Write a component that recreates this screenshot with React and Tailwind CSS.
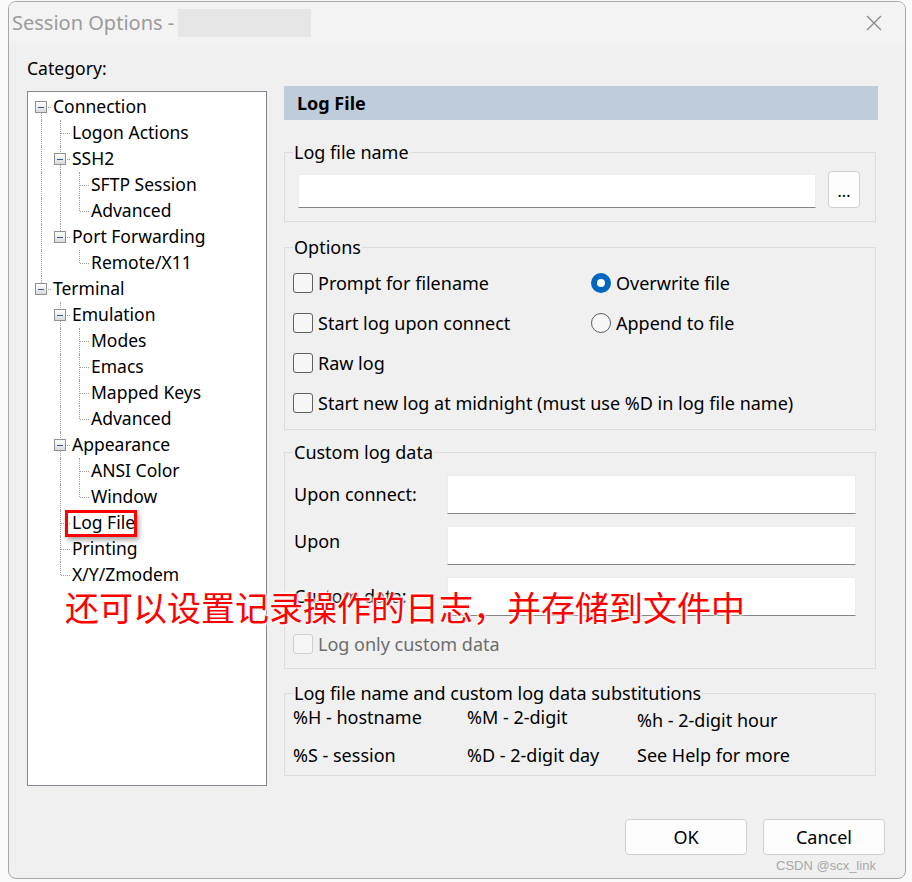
import React from "react";

const FONT = { fontFamily: '"Noto Sans", "Open Sans", sans-serif' };

const treeRows = [
  { label: "Connection", guides: [], elbow: "first", box: true },
  { label: "Logon Actions", guides: [true], elbow: "mid" },
  { label: "SSH2", guides: [true], elbow: "mid", box: true },
  { label: "SFTP Session", guides: [true, true], elbow: "mid" },
  { label: "Advanced", guides: [true, true], elbow: "last" },
  { label: "Port Forwarding", guides: [true], elbow: "last", box: true },
  { label: "Remote/X11", guides: [true, false], elbow: "last" },
  { label: "Terminal", guides: [], elbow: "last", box: true },
  { label: "Emulation", guides: [false], elbow: "mid", box: true },
  { label: "Modes", guides: [false, true], elbow: "mid" },
  { label: "Emacs", guides: [false, true], elbow: "mid" },
  { label: "Mapped Keys", guides: [false, true], elbow: "mid" },
  { label: "Advanced", guides: [false, true], elbow: "last" },
  { label: "Appearance", guides: [false], elbow: "mid", box: true },
  { label: "ANSI Color", guides: [false, true], elbow: "mid" },
  { label: "Window", guides: [false, true], elbow: "last" },
  { label: "Log File", guides: [false], elbow: "mid", highlight: true },
  { label: "Printing", guides: [false], elbow: "mid" },
  { label: "X/Y/Zmodem", guides: [false], elbow: "last" },
];

function TreeRow({ label, guides, elbow, box, highlight }) {
  return (
    <div className="flex h-[26px] items-center">
      {guides.map((g, i) => (
        <div key={i} className="relative h-full w-[19px] shrink-0">
          {g && (
            <div className="absolute left-[9px] top-0 bottom-0 border-l border-dotted border-[#a0a0a0]" />
          )}
        </div>
      ))}
      <div className="relative h-full w-[19px] shrink-0">
        {elbow === "first" && (
          <div className="absolute left-[9px] top-[13px] bottom-0 border-l border-dotted border-[#a0a0a0]" />
        )}
        {elbow === "mid" && (
          <div className="absolute left-[9px] top-0 bottom-0 border-l border-dotted border-[#a0a0a0]" />
        )}
        {elbow === "last" && (
          <div className="absolute left-[9px] top-0 h-[13px] border-l border-dotted border-[#a0a0a0]" />
        )}
        <div className="absolute left-[10px] top-[13px] w-[9px] border-t border-dotted border-[#a0a0a0]" />
        {box && (
          <div className="absolute left-[3px] top-[7px] flex h-[12px] w-[12px] items-center justify-center border border-[#919191] bg-gradient-to-b from-white to-[#dadada]">
            <div className="h-[1px] w-[6px] bg-[#3f5590]" />
          </div>
        )}
      </div>
      <span className="relative pl-[2px] text-[17.5px] leading-none text-black">
        {label}
        {highlight && (
          <span className="absolute left-[-5px] right-[-2px] top-[-4px] bottom-[-5px] border-[3px] border-[#ff0000] shadow-[2px_3px_5px_rgba(0,0,0,0.35)]" />
        )}
      </span>
    </div>
  );
}

function Checkbox({ disabled }) {
  return (
    <div
      className={
        "h-[20px] w-[20px] shrink-0 rounded-[3px] border " +
        (disabled ? "border-[#cfcfcf] bg-[#f5f5f5]" : "border-[#5f5f5f] bg-[#f7f7f7]")
      }
    />
  );
}

function Radio({ checked }) {
  return checked ? (
    <div className="flex h-[20px] w-[20px] shrink-0 items-center justify-center rounded-full bg-[#0067c0]">
      <div className="h-[8px] w-[8px] rounded-full bg-white" />
    </div>
  ) : (
    <div className="h-[20px] w-[20px] shrink-0 rounded-full border border-[#5f5f5f] bg-[#f7f7f7]" />
  );
}

function Group({ title, className, children }) {
  return (
    <fieldset className={"border border-[#dcdcdc] " + (className || "")}>
      <legend className="ml-[8px] px-[1px] text-[18px] leading-[24px] text-black">{title}</legend>
      {children}
    </fieldset>
  );
}

function TextInput({ className }) {
  return (
    <div
      className={
        "border border-[#ececec] border-b-[#858585] bg-white " + (className || "")
      }
    />
  );
}

export default function App() {
  return (
    <div className="relative h-[882px] w-[912px] overflow-hidden bg-[#fafafa]" style={FONT}>
      <div className="absolute left-[8px] top-[1px] flex h-[878px] w-[898px] flex-col overflow-hidden rounded-[8px] border border-[#a8a8a8] bg-[#f0f0f0]">
        {/* Title bar */}
        <div className="flex h-[41px] shrink-0 items-center bg-[#f3f3f3] pl-[3px]">
          <span className="text-[20px] leading-none text-[#9b9b9b]">Session Options -</span>
          <div className="ml-[4px] h-[28px] w-[133px] bg-[#e6e6e6]" />
          <div className="flex-1" />
          <svg width="20" height="20" viewBox="0 0 20 20" className="mr-[21px]">
            <path d="M3 3 L17 17 M17 3 L3 17" stroke="#8a8a8a" strokeWidth="1.3" />
          </svg>
        </div>

        {/* Body */}
        <div className="flex pl-[18px] pt-[13px]">
          {/* Left column */}
          <div className="flex w-[240px] shrink-0 flex-col">
            <div className="flex h-[24px] items-center text-[17.6px] text-black">Category:</div>
            <div className="mt-[11px] h-[695px] border border-[#838790] bg-white pl-[4px] pt-[2px]">
              {treeRows.map((r, i) => (
                <TreeRow key={i} {...r} />
              ))}
            </div>
          </div>

          {/* Right panel */}
          <div className="ml-[17px] mt-[30px] flex w-[594px] flex-col">
            <div className="flex h-[34px] items-center bg-[#bfcddb] pl-[13px] text-[18px] font-bold text-black">
              Log File
            </div>

            <Group title="Log file name" className="mt-[20px] w-[592px] pb-[13px]">
              <div className="mt-[7px] flex items-end pl-[13px]">
                <TextInput className="h-[34px] w-[518px]" />
                <div className="ml-[12px] flex h-[37px] w-[32px] items-center justify-center rounded-[4px] border border-[#d0d0d0] bg-[#fdfdfd] pt-[2px] text-[16px] leading-none text-black">
                  ...
                </div>
              </div>
            </Group>

            <Group title="Options" className="mt-[13px] w-[592px] pb-[6px]">
              <div className="mt-[4px] grid grid-cols-[298px_1fr] pl-[8px] text-[18px] text-black">
                <div className="flex h-[40px] items-center gap-[5px]">
                  <Checkbox />
                  <span>Prompt for filename</span>
                </div>
                <div className="flex h-[40px] items-center gap-[5px]">
                  <Radio checked />
                  <span>Overwrite file</span>
                </div>
                <div className="flex h-[40px] items-center gap-[5px]">
                  <Checkbox />
                  <span>Start log upon connect</span>
                </div>
                <div className="flex h-[40px] items-center gap-[5px]">
                  <Radio />
                  <span>Append to file</span>
                </div>
                <div className="col-span-2 flex h-[40px] items-center gap-[5px]">
                  <Checkbox />
                  <span>Raw log</span>
                </div>
                <div className="col-span-2 flex h-[40px] items-center gap-[5px] overflow-hidden whitespace-nowrap pr-[74px]">
                  <Checkbox />
                  <span className="overflow-hidden">Start new log at midnight (must use %D in log file name)</span>
                </div>
              </div>
            </Group>

            <Group title="Custom log data" className="mt-[10px] w-[592px] pb-[8px]">
              <div className="mt-[11px] flex flex-col gap-[12px] pl-[9px] text-[18px] text-black">
                <div className="flex items-center">
                  <span className="w-[153px]">Upon connect:</span>
                  <TextInput className="h-[39px] w-[409px]" />
                </div>
                <div className="flex items-center">
                  <span className="w-[153px] -translate-y-[4px]">Upon</span>
                  <TextInput className="h-[39px] w-[409px]" />
                </div>
                <div className="flex items-center">
                  <span className="w-[153px]">Custom data:</span>
                  <TextInput className="h-[39px] w-[409px]" />
                </div>
              </div>
              <div className="mt-[12px] flex h-[32px] items-center gap-[5px] pl-[8px] text-[18px] text-[#6d6d6d]">
                <Checkbox disabled />
                <span>Log only custom data</span>
              </div>
            </Group>

            <Group title="Log file name and custom log data substitutions" className="mt-[12px] w-[592px] pb-[8px]">
              <div className="grid grid-cols-[174px_170px_1fr] gap-y-[14px] pl-[8px] text-[18px] text-black">
                <div className="flex h-[24px] items-center">%H - hostname</div>
                <div className="flex h-[24px] items-center">%M - 2-digit</div>
                <div className="flex h-[24px] translate-y-[3px] items-center">%h - 2-digit hour</div>
                <div className="flex h-[24px] items-center">%S - session</div>
                <div className="flex h-[24px] items-center">%D - 2-digit day</div>
                <div className="flex h-[24px] items-center">See Help for more</div>
              </div>
            </Group>
          </div>
        </div>

        {/* Footer buttons */}
        <div className="mt-[33px] flex justify-end gap-[16px] pr-[20px]">
          <div className="flex h-[36px] w-[122px] items-center justify-center rounded-[4px] border border-[#d0d0d0] bg-[#fdfdfd] text-[18px] text-black">
            OK
          </div>
          <div className="flex h-[36px] w-[122px] items-center justify-center rounded-[4px] border border-[#d0d0d0] bg-[#fdfdfd] text-[18px] text-black">
            Cancel
          </div>
        </div>
      </div>

      {/* Red annotation overlay */}
      <div
        className="absolute left-[65px] top-[590px] whitespace-nowrap text-[34px] leading-none text-[#ff0000] [text-shadow:0_0_2px_#fff,0_0_3px_#fff,1px_1px_3px_#fff,-1px_-1px_3px_#fff]"
        style={{ fontFamily: '"Noto Sans CJK SC", sans-serif' }}
      >
        还可以设置记录操作的日志，并存储到文件中
      </div>

      {/* Watermark */}
      <div className="absolute left-[776px] top-[857px] text-[13px] leading-[18px] text-[#a8a8a8]" style={{ fontFamily: '"Liberation Sans", sans-serif' }}>
        CSDN @scx_link
      </div>
    </div>
  );
}
